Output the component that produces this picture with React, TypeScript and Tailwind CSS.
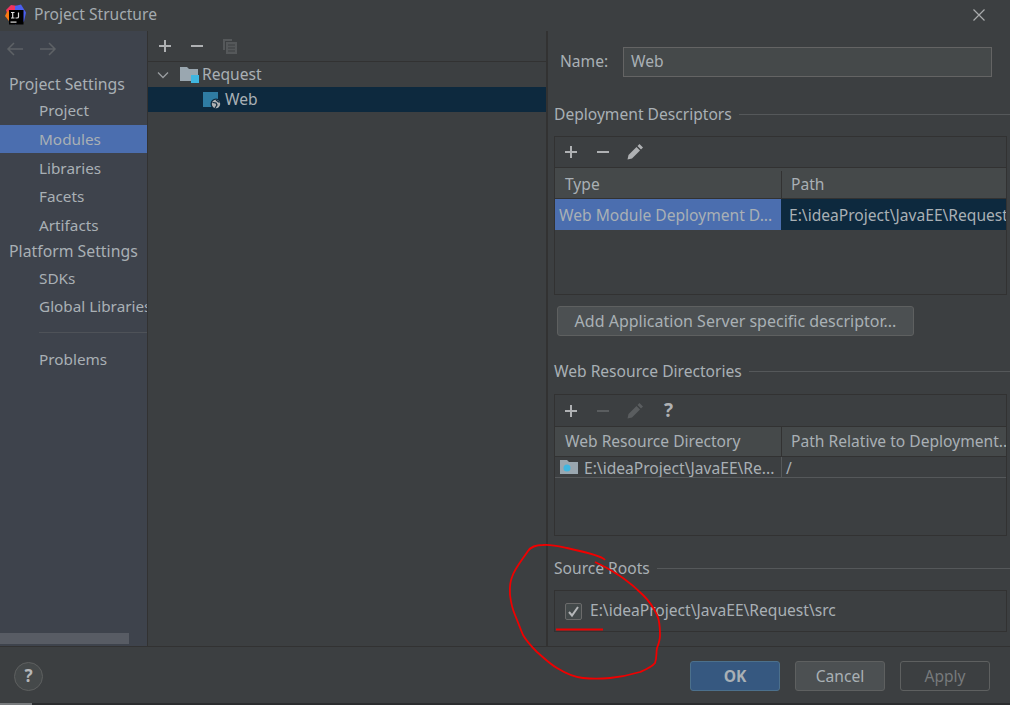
import React from "react";

const font = { fontFamily: '"Noto Sans", "Open Sans", sans-serif' };

function PlusIcon() {
  return (
    <svg width="14" height="14" viewBox="0 0 14 14">
      <path d="M7 1v12M1 7h12" stroke="#afb1b3" strokeWidth="2" fill="none" />
    </svg>
  );
}

function MinusIcon({ dim = false }: { dim?: boolean }) {
  return (
    <svg width="14" height="14" viewBox="0 0 14 14">
      <path d="M1 7h12" stroke={dim ? "#5a5d5f" : "#afb1b3"} strokeWidth="2" fill="none" />
    </svg>
  );
}

function PencilIcon({ dim = false }: { dim?: boolean }) {
  return (
    <svg width="18" height="18" viewBox="0 0 18 18">
      <path d="M13.500 1l3.500 3.500-2 2L11.500 3zM10.500 4l3.500 3.500L6 15.500l-4.500 1 1-4.500z" fill={dim ? "#5a5d5f" : "#afb1b3"} />
    </svg>
  );
}

function NavItem({ label, height, active = false }: { label: string; height: string; active?: boolean }) {
  return (
    <div className={`${height} pl-[39px] flex items-center text-[15.300px] whitespace-nowrap overflow-hidden ${active ? "bg-[#4b6eaf]" : ""}`}>
      {label}
    </div>
  );
}

function SectionTitle({ label }: { label: string }) {
  return (
    <div className="flex items-center gap-[7px] pl-[6px] h-6 text-[15.600px]">
      <span className="whitespace-nowrap pt-[2px]">{label}</span>
      <div className="h-px flex-1 bg-[#55585a]" />
    </div>
  );
}

function ColHeader({ left, right, height }: { left: string; right: string; height: string }) {
  return (
    <div className={`flex ${height} bg-[#45494a] border-y border-[#323232] text-[15.600px]`}>
      <div className="w-[227px] pl-[10px] flex items-center border-r border-[#323232] whitespace-nowrap">{left}</div>
      <div className="flex-1 pl-[9px] flex items-center whitespace-nowrap overflow-hidden">{right}</div>
    </div>
  );
}

export default function App() {
  return (
    <div className="relative w-[1010px] h-[705px] overflow-hidden bg-[#3c3f41] text-[#a9b0b5]" style={font}>
      {/* title bar */}
      <div className="h-[31px] flex items-center pl-[4px] pr-[24px] pb-[2px]">
        <svg width="23" height="23" viewBox="0 0 23 23">
          <path d="M2 7l5-5 7 1-3 16-6-2z" fill="#f0345f" />
          <path d="M11 3l6-1.500 5 8-2 9-9 3z" fill="#4a5ff0" />
          <path d="M1 13l3-6 4 9-3 2z" fill="#f97a12" />
          <rect x="5" y="7" width="14.500" height="14.500" fill="#000" />
          <rect x="6.500" y="18.500" width="6" height="1.200" fill="#ddd" />
          <path d="M7 9.500h3.500M8.700 9.500v5.500M7 15h3.500M14.500 9.500V14q0 1-1.500 1h-1.500" stroke="#ddd" strokeWidth="1.200" fill="none" />
        </svg>
        <span className="ml-[7px] text-[15.600px] text-[#a4abb0]">Project Structure</span>
        <svg width="14" height="14" viewBox="0 0 14 14" className="ml-auto">
          <path d="M1.500 1.500l11 11M12.500 1.500l-11 11" stroke="#a9abad" strokeWidth="1.200" fill="none" />
        </svg>
      </div>

      {/* main area */}
      <div className="flex h-[616px] border-b border-[#323232]">
        {/* sidebar */}
        <div className="relative w-[148px] shrink-0 bg-[#3e434c] border-r border-[#323232]">
          <div className="h-[40px] pl-[6px] pb-[4px] flex items-center gap-[9px]">
            <svg width="24" height="16" viewBox="0 0 24 16"><path d="M17 8H2M8 2L2 8l6 6" stroke="#5e6266" strokeWidth="1.500" fill="none" /></svg>
            <svg width="24" height="16" viewBox="0 0 24 16"><path d="M1 8h15M10 2l6 6-6 6" stroke="#5e6266" strokeWidth="1.500" fill="none" /></svg>
          </div>
          <div className="h-[25px] pt-[3px] pl-[9px] flex items-center text-[15.800px] whitespace-nowrap">Project Settings</div>
          <NavItem label="Project" height="h-[29px]" />
          <NavItem label="Modules" height="h-[28px]" active />
          <NavItem label="Libraries" height="h-[29px] pt-[2px]" />
          <NavItem label="Facets" height="h-[29px]" />
          <NavItem label="Artifacts" height="h-[28px]" />
          <div className="h-[25px] pl-[9px] flex items-center text-[15.800px] whitespace-nowrap">Platform Settings</div>
          <NavItem label="SDKs" height="h-[28px]" />
          <NavItem label="Global Libraries" height="h-[28px]" />
          <div className="ml-[39px] mt-[12px] mb-[12px] h-px bg-[#4e5258]" />
          <NavItem label="Problems" height="h-[28px]" />
          <div className="absolute left-0 bottom-[2px] w-[129px] h-[11px] bg-[#585c64]" />
        </div>

        {/* tree */}
        <div className="w-[400px] shrink-0 border-r-2 border-[#323232]">
          <div className="h-[31px] flex items-center pl-[10px] gap-[18px] border-b border-[#323232]">
            <PlusIcon />
            <MinusIcon />
            <svg width="16" height="16" viewBox="0 0 16 16">
              <path d="M1 1h9v2H3v9H1z" fill="#55585a" />
              <path d="M4 4h11v12H4z" fill="#55585a" />
              <path d="M6 7h7M6 10h7M6 13h7" stroke="#3c3f41" strokeWidth="1" />
            </svg>
          </div>
          <div className="h-[25px] flex items-center pl-[9px] text-[15.600px]">
            <svg width="12" height="12" viewBox="0 0 12 12"><path d="M1 3.500l5 5 5-5" stroke="#9a9da0" strokeWidth="1.300" fill="none" /></svg>
            <svg width="20" height="18" viewBox="0 0 20 18" className="ml-[11px]">
              <path d="M0 1h7l2 2h9v12H0z" fill="#9aa7b0" />
              <rect x="11" y="9" width="8" height="8" fill="#40b6e0" />
            </svg>
            <span className="ml-[2px]">Request</span>
          </div>
          <div className="h-[25px] flex items-center pl-[55px] bg-[#0d293e] text-[15.600px]">
            <svg width="18" height="18" viewBox="0 0 18 18">
              <rect x="0" y="1" width="15" height="15" fill="#2f7ca3" />
              <circle cx="13" cy="13" r="5.500" fill="#0d293e" />
              <circle cx="13" cy="13" r="4.200" fill="#afb1b3" />
              <path d="M9.500 11.500l3.500.500 1 2-2 3M13 9l3.500 2.500" stroke="#0d293e" strokeWidth="1.200" fill="none" />
            </svg>
            <span className="ml-[4px]">Web</span>
          </div>
        </div>

        {/* details */}
        <div className="flex-1 min-w-0">
          <div className="h-[61px] flex items-center pl-[12px] pr-[18px] text-[15.600px]">
            <span className="w-[63px]">Name:</span>
            <div className="flex-1 h-[30px] flex items-center pl-[7px] bg-[#45494a] border border-[#646464]">Web</div>
          </div>

          <div className="mt-[10px]">
            <SectionTitle label="Deployment Descriptors" />
          </div>
          <div className="ml-[6px] mt-[10px] mr-[3px] h-[159px] border border-[#323232]">
            <div className="h-[30px] flex items-center pl-[9px] gap-[18px]">
              <PlusIcon />
              <MinusIcon />
              <div className="-ml-[2px]"><PencilIcon /></div>
            </div>
            <ColHeader left="Type" right="Path" height="h-[32px] pt-[3px]" />
            <div className="flex h-[31px] text-[15.600px]">
              <div className="w-[226px] pl-[4px] pt-[2px] flex items-center bg-[#4b6eaf] whitespace-nowrap overflow-hidden">Web Module Deployment D...</div>
              <div className="flex-1 pl-[8px] pt-[2px] flex items-center bg-[#0d293e] whitespace-nowrap overflow-hidden">E:\ideaProject\JavaEE\Request</div>
            </div>
          </div>
          <div className="ml-[9px] mt-[11px] w-[357px] h-[30px] flex items-center justify-center bg-[#4c5052] border border-[#5e6060] rounded-[3px] text-[16px] whitespace-nowrap">
            Add Application Server specific descriptor...
          </div>

          <div className="mt-[23px]">
            <SectionTitle label="Web Resource Directories" />
          </div>
          <div className="ml-[6px] mt-[11px] mr-[3px] h-[142px] border border-[#323232]">
            <div className="h-[31px] flex items-center pl-[9px] gap-[18px]">
              <PlusIcon />
              <MinusIcon dim />
              <div className="-ml-[2px]"><PencilIcon dim /></div>
              <span className="ml-[2px] text-[19px] font-bold text-[#afb1b3] leading-none">?</span>
            </div>
            <ColHeader left="Web Resource Directory" right="Path Relative to Deployment..." height="h-[31px]" />
            <div className="flex h-[21px] text-[15.600px] border-b border-[#55585a]">
              <div className="w-[227px] pl-[5px] flex items-center border-r border-[#55585a] whitespace-nowrap overflow-hidden">
                <svg width="18" height="14" viewBox="0 0 18 14" className="shrink-0">
                  <path d="M0 0h7l2 2h9v12H0z" fill="#9aa7b0" />
                  <circle cx="7" cy="8" r="3.500" fill="#40b6e0" />
                </svg>
                <span className="ml-[6px] pt-[3px]">E:\ideaProject\JavaEE\Re...</span>
              </div>
              <div className="flex-1 pl-[4px] pt-[3px] flex items-center">/</div>
            </div>
          </div>

          <div className="mt-[20px]">
            <SectionTitle label="Source Roots" />
          </div>
          <div className="ml-[6px] mt-[10px] mr-[3px] h-[42px] flex items-center pl-[10px] border border-[#323232] text-[15.600px]">
            <div className="w-[17px] h-[17px] flex items-center justify-center bg-[#43494a] border border-[#6b6b6b] rounded-[2px]">
              <svg width="13" height="13" viewBox="0 0 13 13"><path d="M2 7l3 3.500L11 2" stroke="#b5b7b9" strokeWidth="2" fill="none" /></svg>
            </div>
            <span className="ml-[8px] whitespace-nowrap">E:\ideaProject\JavaEE\Request\src</span>
          </div>
        </div>
      </div>

      {/* footer */}
      <div className="h-[56px] flex items-center pt-[2px] pl-[14px] pr-[20px] text-[15.600px]">
        <div className="w-[29px] h-[29px] flex items-center justify-center rounded-full bg-[#45494a] border border-[#5e6060] text-[17px] font-bold text-[#b5b7b9]">?</div>
        <div className="ml-auto w-[90px] h-[30px] pt-[2px] flex items-center justify-center bg-[#365880] border border-[#4c708c] rounded-[3px] font-bold">OK</div>
        <div className="ml-[15px] w-[90px] h-[30px] pt-[2px] flex items-center justify-center bg-[#4c5052] border border-[#5e6060] rounded-[3px]">Cancel</div>
        <div className="ml-[15px] w-[90px] h-[30px] pt-[2px] flex items-center justify-center border border-[#5e6060] rounded-[3px] text-[#777a7c]">Apply</div>
      </div>
      <div className="h-[2px] bg-[#2b2d2f]">
        <div className="w-[32px] h-full bg-[#777a7c]" />
      </div>

      {/* red annotation drawn over the dialog */}
      <svg width="1010" height="705" viewBox="0 0 1010 705" className="absolute inset-0 pointer-events-none">
        <path
          d="M605 560C603 556 585 552 567 548C558 546 550 544 543 545C535 545 530 548 528 551C522 560 515 568 512 577C509 585 510 590 510 595C511 603 512 608 515 615C518 622 520 628 523 635C527 642 532 647 537 652C544 658 550 664 557 668C565 673 574 677 583 678C592 679 600 679 610 678C620 677 630 675 640 672C647 669 652 667 655 663C657 658 656 653 657 648C659 643 660 639 660 635C660 627 660 621 657 615C654 608 649 601 643 595C637 589 630 583 623 578C617 574 612 571 607 568C603 566 599 564 595 562"
          stroke="#f00000"
          strokeWidth="1.800"
          fill="none"
        />
        <path d="M556 629.500H603" stroke="#f00000" strokeWidth="2" fill="none" />
      </svg>
    </div>
  );
}
